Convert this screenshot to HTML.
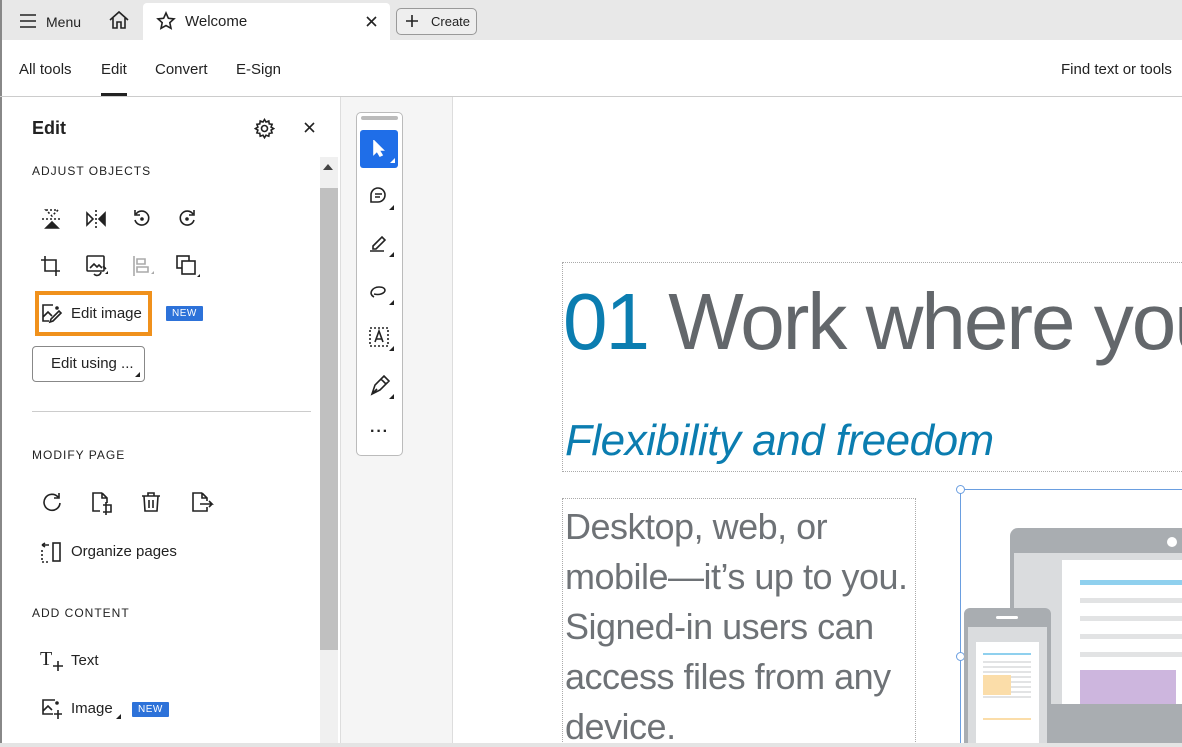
<!DOCTYPE html>
<html><head><meta charset="utf-8"><style>
*{margin:0;padding:0;box-sizing:border-box}
html,body{width:1182px;height:747px;overflow:hidden}
body{background:#fff;font-family:"Liberation Sans",sans-serif;color:#222;position:relative}
.a{position:absolute}
svg{position:absolute;fill:none;stroke:#222;stroke-width:1.6}
.sec{font-size:12px;letter-spacing:1px;color:#222}
.new{background:#2d72d9;color:#fff;font-size:10px;letter-spacing:.5px;padding:2px 6px;border-radius:1px}
.tri{width:0;height:0;border-left:5px solid transparent;border-bottom:5px solid #222}
</style></head><body>
<div class="a" style="left:0;top:0;width:1182px;height:40px;background:#e8e8e8"></div>
<div class="a" style="left:0;top:0;width:2px;height:747px;background:#888"></div>
<svg style="left:19px;top:13px" width="18" height="16"><path d="M1 2h16M1 8h16M1 14h16"/></svg>
<div class="a" style="left:46px;top:14px;font-size:14px">Menu</div>
<svg style="left:108px;top:10px" width="22" height="20"><path d="M2 10 11 2l9 8M5 8v10h4v-6h4v6h4V8"/></svg>
<div class="a" style="left:143px;top:3px;width:247px;height:37px;background:#fff;border-radius:4px 4px 0 0"></div>
<svg style="left:156px;top:11px" width="20" height="20"><path d="M10 2l2.4 5.3 5.6.6-4.2 3.8 1.2 5.6L10 14.5l-5 2.8 1.2-5.6L2 7.9l5.6-.6z"/></svg>
<div class="a" style="left:185px;top:13px;font-size:15px">Welcome</div>
<svg style="left:366px;top:16px" width="11" height="11"><path d="M1 1l9 9M10 1 1 10"/></svg>
<div class="a" style="left:396px;top:8px;width:81px;height:27px;border:1px solid #999;border-radius:5px;background:#eee"></div>
<svg style="left:405px;top:14px" width="14" height="14"><path d="M7 1v12M1 7h12"/></svg>
<div class="a" style="left:431px;top:14px;font-size:13px">Create</div>
<div class="a" style="left:19px;top:61px;font-size:15px">All tools</div>
<div class="a" style="left:101px;top:61px;font-size:15px">Edit</div>
<div class="a" style="left:101px;top:93px;width:26px;height:3px;background:#222"></div>
<div class="a" style="left:155px;top:61px;font-size:15px">Convert</div>
<div class="a" style="left:236px;top:61px;font-size:15px">E-Sign</div>
<div class="a" style="left:1061px;top:61px;font-size:15px">Find text or tools</div>
<div class="a" style="left:0;top:96px;width:1182px;height:1px;background:#ccc"></div>
<div class="a" style="left:32px;top:118px;font-size:18px;font-weight:bold">Edit</div>
<svg style="left:254px;top:118px" width="21" height="21"><circle cx="10.5" cy="10.5" r="3"/><path d="M10.5 1.5l1.5 2.5 2.8-1 .4 2.9 2.9.4-1 2.8 2.5 1.5-2.5 1.5 1 2.8-2.9.4-.4 2.9-2.8-1-1.5 2.5-1.5-2.5-2.8 1-.4-2.9-2.9-.4 1-2.8-2.5-1.5 2.5-1.5-1-2.8 2.9-.4.4-2.9 2.8 1z"/></svg>
<svg style="left:304px;top:122px" width="11" height="11"><path d="M1 1l9 9M10 1 1 10"/></svg>
<div class="a sec" style="left:32px;top:164px">ADJUST OBJECTS</div>
<svg style="left:41px;top:208px" width="22" height="22"><path d="M5 2h12l-6 6zM1 11h20" stroke-dasharray="2 2"/><path d="M5 20h12l-6-6z" fill="#222"/></svg>
<svg style="left:85px;top:208px" width="22" height="22"><path d="M2 5v12l6-6z"/><path d="M20 5v12l-6-6z" fill="#222"/><path d="M11 2v18" stroke-dasharray="2 2"/></svg>
<svg style="left:131px;top:208px" width="22" height="22"><path d="M5 6a7 7 0 1 1-1 6M4 2v5h5"/><circle cx="11" cy="11" r="1" fill="#222"/></svg>
<svg style="left:176px;top:208px" width="22" height="22"><path d="M17 6a7 7 0 1 0 1 6M18 2v5h-5"/><circle cx="11" cy="11" r="1" fill="#222"/></svg>
<svg style="left:40px;top:255px" width="22" height="22"><path d="M5 1v15h15M1 5h15v16"/></svg>
<svg style="left:85px;top:254px" width="24" height="24"><rect x="2" y="2" width="17" height="15" rx="1"/><path d="M5 14l4-4 3 3 2-2 3 3M9 20a4 4 0 0 0 7-2M18 12l3 3"/><path d="M20 20l3 0 0-3z" fill="#222" stroke="none"/></svg>
<svg style="left:131px;top:254px;stroke:#aaa" width="24" height="24"><path d="M3 2v20M6 5h8v5H6zM6 13h11v5H6z"/><path d="M20 20l3 0 0-3z" fill="#aaa" stroke="none"/></svg>
<svg style="left:175px;top:254px" width="26" height="26"><rect x="2" y="2" width="12" height="12"/><rect x="7" y="7" width="13" height="13" fill="#fff"/><path d="M22 23h3v-3z" fill="#222" stroke="none"/></svg>
<div class="a" style="left:35px;top:291px;width:117px;height:45px;border:4px solid #f0911c"></div>
<svg style="left:41px;top:303px" width="22" height="22"><path d="M12 2H2v16h6M2 14l5-5 4 4"/><circle cx="16" cy="5" r="1" fill="#222"/><path d="M20 10l-8 8-3 1 1-3 8-8z"/></svg>
<div class="a" style="left:71px;top:305px;font-size:15px">Edit image</div>
<div class="a new" style="left:166px;top:306px">NEW</div>
<div class="a" style="left:32px;top:346px;width:113px;height:36px;border:1px solid #888;border-radius:4px"></div>
<div class="a" style="left:51px;top:355px;font-size:15px">Edit using ...</div>
<div class="a tri" style="left:135px;top:372px"></div>
<div class="a" style="left:32px;top:411px;width:279px;height:1px;background:#ccc"></div>
<div class="a sec" style="left:32px;top:448px">MODIFY PAGE</div>
<svg style="left:41px;top:492px" width="22" height="22"><path d="M17 5a8 8 0 1 0 2 6M18 1v5h-5"/></svg>
<svg style="left:90px;top:491px" width="24" height="24"><path d="M12 2H3v18h7M12 2l5 5v5M12 2v5h5"/><path d="M13 14h8v7h-8M16 11v13"/></svg>
<svg style="left:140px;top:491px" width="22" height="22"><path d="M2 5h18M8 5V2h6v3M4 5l1 15h12l1-15M9 9v8M13 9v8"/></svg>
<svg style="left:190px;top:491px" width="24" height="24"><path d="M12 2H3v18h14v-4M12 2l5 5v3M12 2v5h5M10 13h12l-3-3M22 13l-3 3"/></svg>
<svg style="left:40px;top:541px" width="22" height="22"><path d="M2 4h7M2 4l3-2M2 4l3 2" /><path d="M2 9v12h8" stroke-dasharray="2 2"/><rect x="13" y="2" width="7" height="18"/></svg>
<div class="a" style="left:71px;top:543px;font-size:15px">Organize pages</div>
<div class="a sec" style="left:32px;top:606px">ADD CONTENT</div>
<div class="a" style="left:40px;top:648px;font-size:20px;font-family:'Liberation Serif',serif">T</div><svg style="left:52px;top:660px" width="12" height="12"><path d="M6 1v10M1 6h10"/></svg>
<div class="a" style="left:71px;top:652px;font-size:15px">Text</div>
<svg style="left:41px;top:698px" width="22" height="22"><path d="M14 2H2v14h10M2 13l5-5 4 4M17 12v9M13 16h8"/><circle cx="16" cy="5" r="1" fill="#222"/></svg>
<div class="a" style="left:71px;top:700px;font-size:15px">Image</div>
<div class="a tri" style="left:116px;top:714px"></div>
<div class="a new" style="left:132px;top:702px">NEW</div>
<div class="a" style="left:320px;top:157px;width:18px;height:590px;background:#f0f0f0"></div>
<div class="a" style="left:323px;top:164px;width:0;height:0;border-left:5px solid transparent;border-right:5px solid transparent;border-bottom:6px solid #444"></div>
<div class="a" style="left:320px;top:188px;width:18px;height:462px;background:#c0c0c0"></div>
<div class="a" style="left:340px;top:97px;width:113px;height:650px;background:#f5f5f5;border-left:1px solid #ddd;border-right:1px solid #ddd"></div>
<div class="a" style="left:356px;top:112px;width:47px;height:344px;background:#fff;border:1px solid #bbb;border-radius:5px"></div>
<div class="a" style="left:361px;top:116px;width:37px;height:4px;background:#bbb;border-radius:2px"></div>
<div class="a" style="left:360px;top:130px;width:38px;height:38px;background:#1f6ee8;border-radius:3px"></div>
<svg style="left:372px;top:140px;stroke:#fff" width="14" height="18"><path d="M2 1v13l3-3 3 5 2-1-3-5h4z" fill="#fff"/></svg>
<div class="a tri" style="left:390px;top:158px;border-bottom-color:#fff"></div>
<svg style="left:368px;top:185px" width="28" height="28"><path d="M10 3a7 7 0 1 1 0 14H3V10a7 7 0 0 1 7-7zM7 9h7M7 12h5"/><path d="M21 25h5v-5z" fill="#222" stroke="none"/></svg>
<svg style="left:368px;top:232px" width="28" height="28"><path d="M5 14l9-9 3 3-9 9H5zM2 19h14" /><path d="M21 25h5v-5z" fill="#222" stroke="none"/></svg>
<svg style="left:368px;top:280px" width="28" height="28"><path d="M6 17c-6-3-2-10 5-10s8 5 2 7c-3 1-7 0-7 0"/><path d="M21 25h5v-5z" fill="#222" stroke="none"/></svg>
<svg style="left:368px;top:326px" width="28" height="28"><rect x="2" y="2" width="18" height="18" stroke-dasharray="2 2"/><path d="M7 16l4-11 4 11M8 13h6"/><path d="M21 25h5v-5z" fill="#222" stroke="none"/></svg>
<svg style="left:368px;top:374px" width="28" height="28"><path d="M4 20l3-9 6-6 5 5-6 6zM4 20l5-5M13 5l3-3 5 5-3 3"/><path d="M21 25h5v-5z" fill="#222" stroke="none"/></svg>
<div class="a" style="left:370px;top:423px;font-size:16px;font-weight:bold;letter-spacing:1px">···</div>
<div class="a" style="left:562px;top:262px;width:630px;height:210px;border:1px dotted #aaa"></div>
<div class="a" style="left:563px;top:276px;font-size:80px;white-space:nowrap;letter-spacing:-2px;color:#63676b"><span style="color:#0b7db0">01</span> Work where you</div>
<div class="a" style="left:565px;top:416px;font-size:44px;font-style:italic;color:#0b7db0;white-space:nowrap;letter-spacing:-.5px">Flexibility and freedom</div>
<div class="a" style="left:562px;top:498px;width:354px;height:260px;border:1px dotted #aaa"></div>
<div class="a" style="left:565px;top:502px;font-size:36px;line-height:50px;color:#6e7276;width:360px;letter-spacing:-.5px">Desktop, web, or mobile—it’s up to you. Signed-in users can access files from any device.</div>
<div class="a" style="left:960px;top:489px;width:230px;height:1px;background:#6a9ee0"></div>
<div class="a" style="left:960px;top:489px;width:1px;height:260px;background:#6a9ee0"></div>
<div class="a" style="left:956px;top:485px;width:9px;height:9px;border:1.5px solid #6a9ee0;border-radius:50%;background:#fff"></div>
<div class="a" style="left:956px;top:652px;width:9px;height:9px;border:1.5px solid #6a9ee0;border-radius:50%;background:#fff"></div>
<div class="a" style="left:1010px;top:528px;width:180px;height:220px;background:#a9adb1;border-radius:8px 0 0 0"></div>
<div class="a" style="left:1167px;top:537px;width:10px;height:10px;background:#fff;border-radius:50%"></div>
<div class="a" style="left:1014px;top:553px;width:170px;height:160px;background:#dadcde"></div>
<div class="a" style="left:1062px;top:560px;width:120px;height:150px;background:#fff"></div>
<div class="a" style="left:1080px;top:580px;width:102px;height:5px;background:#8fd0ee"></div>
<div class="a" style="left:1080px;top:598px;width:102px;height:5px;background:#e2e3e4"></div>
<div class="a" style="left:1080px;top:616px;width:102px;height:5px;background:#e2e3e4"></div>
<div class="a" style="left:1080px;top:634px;width:102px;height:5px;background:#e2e3e4"></div>
<div class="a" style="left:1080px;top:652px;width:102px;height:5px;background:#e2e3e4"></div>
<div class="a" style="left:1080px;top:670px;width:96px;height:36px;background:#cdb6de"></div>
<div class="a" style="left:1048px;top:704px;width:134px;height:34px;background:#a9adb1"></div>
<div class="a" style="left:964px;top:608px;width:87px;height:140px;background:#a9adb1;border-radius:6px 6px 0 0"></div>
<div class="a" style="left:996px;top:616px;width:22px;height:3px;background:#fff;border-radius:2px"></div>
<div class="a" style="left:968px;top:627px;width:79px;height:120px;background:#dadcde"></div>
<div class="a" style="left:976px;top:642px;width:63px;height:105px;background:#fff"></div>
<div class="a" style="left:983px;top:653px;width:48px;height:2px;background:#8fd0ee"></div>
<div class="a" style="left:983px;top:658px;width:48px;height:40px;background:repeating-linear-gradient(#fff 0 3px,#e2e3e4 3px 5px)"></div>
<div class="a" style="left:983px;top:675px;width:28px;height:20px;background:#fbdda9"></div>
<div class="a" style="left:983px;top:718px;width:48px;height:2px;background:#fbdda9"></div>
<div class="a" style="left:0;top:743px;width:1182px;height:4px;background:#e4e4e4"></div>
</body></html>
